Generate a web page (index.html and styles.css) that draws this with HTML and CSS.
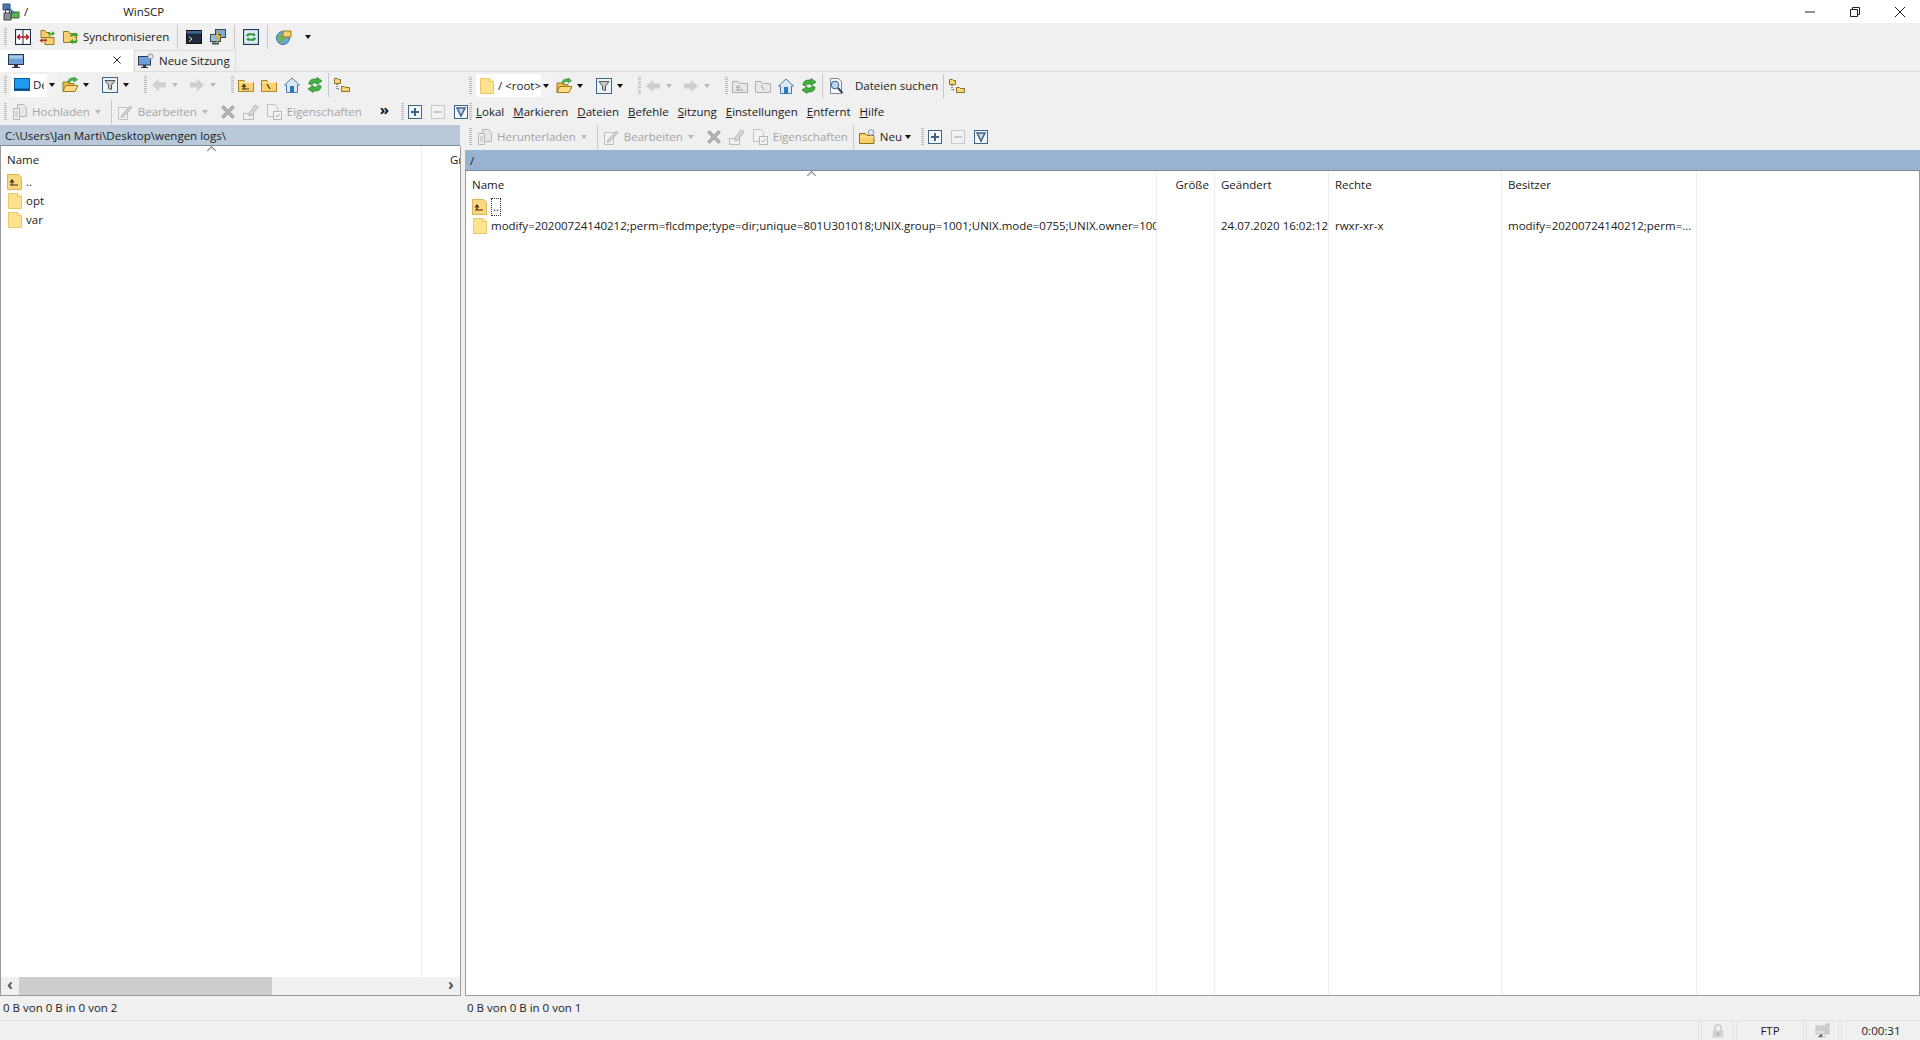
FILE: index.html
```html
<!DOCTYPE html>
<html lang="de">
<head>
<meta charset="utf-8">
<title>WinSCP</title>
<link rel="stylesheet" href="styles.css">
</head>
<body>
<svg class="defs" width="0" height="0" aria-hidden="true">
  <defs>
    <symbol id="folder" viewBox="0 0 16 18"><path d="M1.5 1.5h9l4 3v12h-13z" fill="#fde28f" stroke="#e8c868"/><path d="M10.5 1.5v3h4" fill="#ffefb8" stroke="#e8c868"/></symbol>
    <symbol id="folder-up" viewBox="0 0 16 18"><path d="M.5 1.5h11l3 3v12H.5z" fill="#fbd880" stroke="#dcb552"/><path d="M3 12h8M5 12V7.5M3 9.5l2-2.5 2 2.5" fill="none" stroke="#3a3010" stroke-width="1.2"/></symbol>
    <symbol id="tb-folder" viewBox="0 0 16 16"><path d="M.5 3.5v11h15v-9H7.500l-1.500-2z" fill="#fbd070" stroke="#a98a20"/><path d="M1 5.500h14" stroke="#fff0b8"/></symbol>
    <symbol id="up" viewBox="0 0 16 16"><use href="#tb-folder"/><path d="M4 12h7M6 12V8M4 10l2-2.500 2 2.500" fill="none" stroke="#3a3010" stroke-width="1.200"/></symbol>
    <symbol id="root" viewBox="0 0 16 16"><use href="#tb-folder"/><path d="M6 7l3 5" fill="none" stroke="#3a3010" stroke-width="1.200"/></symbol>
    <symbol id="up-off" viewBox="0 0 16 16"><path d="M.5 3.500v11h15v-9H7.500l-1.500-2z" fill="#e8e8e8" stroke="#b0b0b0"/><path d="M4 12h7M6 12V8M4 10l2-2.500 2 2.500" fill="none" stroke="#a0a0a0"/></symbol>
    <symbol id="root-off" viewBox="0 0 16 16"><path d="M.5 3.500v11h15v-9H7.500l-1.500-2z" fill="#e8e8e8" stroke="#b0b0b0"/><path d="M6 7l3 5" fill="none" stroke="#a0a0a0"/></symbol>
    <symbol id="home" viewBox="0 0 16 16"><path d="M8 1L.5 8h2v7.500h11V8h2z" fill="#dbe7f3" stroke="#4f79a8"/><rect x="6" y="9" width="4" height="6.500" fill="#2d74c4"/></symbol>
    <symbol id="refresh" viewBox="0 0 16 16"><path d="M2 7C2 3 5 2 8 2h2V.5L15 4l-5 3.500V6H8C6 6 5 6.500 5 8z" fill="#43b043" stroke="#1f7a1f" stroke-width=".7"/><path d="M14 9c0 4-3 5-6 5H6v1.500L1 12l5-3.500V10h2c2 0 3-.5 3-2z" fill="#43b043" stroke="#1f7a1f" stroke-width=".7"/></symbol>
    <symbol id="tree" viewBox="0 0 16 16"><path d="M.5 1.500h3l1 1h2v4h-6z" fill="#f8d77a" stroke="#8a7020"/><path d="M3 7v5h3" fill="none" stroke="#333" stroke-dasharray="1 1"/><path d="M7.500 9.500h3l1 1h4v4h-8z" fill="#f8d77a" stroke="#8a7020"/></symbol>
    <symbol id="open" viewBox="0 0 16 16"><path d="M1 14.500V5h5l1 1.500h5v8z" fill="#f2c14f" stroke="#9a7a18"/><path d="M1 14.500l2.500-6H16l-3 6z" fill="#fbdc85" stroke="#9a7a18"/><path d="M6 5c0-3 3-4.500 6-4V0l3.500 2.500L12 5V3.500C9.500 3 8 4 8 5.500z" fill="#4ab54a" stroke="#1f7a1f" stroke-width=".5"/></symbol>
    <symbol id="filter" viewBox="0 0 16 16"><rect x=".5" y=".5" width="15" height="15" fill="#eef3f8" stroke="#3f6488"/><path d="M3 3.500h10L9.500 8v4.500l-3-1V8z" fill="#c9c9c9" stroke="#555"/></symbol>
    <symbol id="back" viewBox="0 0 16 16"><path d="M8 2L1 8l7 6v-3.500h7v-5H8z" fill="#cfcfcf"/></symbol>
    <symbol id="forward" viewBox="0 0 16 16"><path d="M8 2l7 6-7 6v-3.500H1v-5h7z" fill="#cfcfcf"/></symbol>
    <symbol id="copy-off" viewBox="0 0 16 16"><path d="M2.500 4.500h6v11h-6z" fill="#eee" stroke="#b8b8b8"/><path d="M6.500.5h6l3 3v9h-7v-8h-2z" fill="#e6e6e6" stroke="#b8b8b8"/><path d="M4 8h3M4 10h3M4 12h3" stroke="#bbb"/></symbol>
    <symbol id="edit-off" viewBox="0 0 16 16"><path d="M1.500 3.500h9v12h-9z" fill="#f2f2f2" stroke="#c0c0c0"/><path d="M5 11l8-9 2 1.500-8 9-3 1z" fill="#d4d4d4" stroke="#b8b8b8"/></symbol>
    <symbol id="delete" viewBox="0 0 16 16"><path d="M1.500 3.500L3.500 1.500 8 6l4.500-4.500 2 2L10 8l4.500 4.500-2 2L8 10l-4.500 4.500-2-2L6 8z" fill="#b3b3b3" stroke="#a5a5a5"/></symbol>
    <symbol id="rename-off" viewBox="0 0 16 16"><rect x=".5" y="9.500" width="10" height="6" fill="#f0f0f0" stroke="#bbb"/><path d="M6 9l6-8 3 2-6 8-3 1z" fill="#d6d6d6" stroke="#b8b8b8"/></symbol>
    <symbol id="props-off" viewBox="0 0 16 16"><path d="M1.500.5h7l3 3v9h-10z" fill="#f2f2f2" stroke="#c0c0c0"/><rect x="7.500" y="7.500" width="8" height="8" fill="#f5f5f5" stroke="#b8b8b8"/><path d="M9.500 11.500l1.500 1.500 2.500-3" fill="none" stroke="#aaa"/></symbol>
    <symbol id="plus" viewBox="0 0 14 14"><rect x=".5" y=".5" width="13" height="13" fill="#f4f7fa" stroke="#3f6488"/><path d="M3 7h8M7 3v8" stroke="#3f6488" stroke-width="2"/></symbol>
    <symbol id="minus" viewBox="0 0 14 14"><rect x=".5" y=".5" width="13" height="13" fill="#f2f2f2" stroke="#c4c9ce"/><path d="M3 7h8" stroke="#c4c9ce" stroke-width="2"/></symbol>
    <symbol id="invert" viewBox="0 0 14 14"><rect x=".5" y=".5" width="13" height="13" fill="#f4f7fa" stroke="#3f6488"/><path d="M3 3h8L7 11z" fill="#c7d5e3" stroke="#3f6488" stroke-width="1.500"/></symbol>
    <symbol id="monitor" viewBox="0 0 16 16"><rect x=".5" y="1.500" width="15" height="10" fill="#6e9fd6" stroke="#2a3a4e"/><rect x="1.500" y="2.500" width="13" height="3" fill="#a9c8ea"/><path d="M6 12h4v2h2v1H4v-1h2z" fill="#2a3a4e"/></symbol>
    <symbol id="new-session" viewBox="0 0 16 16"><rect x=".5" y="3.500" width="12" height="8.500" fill="#6e9fd6" stroke="#2a3a4e"/><path d="M5 12h3v2h2v1H3v-1h2z" fill="#2a3a4e"/><circle cx="12.500" cy="3.500" r="2.500" fill="#dfe8f2" stroke="#7d94ab"/></symbol>
    <symbol id="drive" viewBox="0 0 16 16"><rect x=".5" y="1.500" width="15" height="12" fill="#1c9bf0" stroke="#0d5c9e"/><path d="M1 12.500h14" stroke="#0a4d85" stroke-width="2"/></symbol>
    <symbol id="compare" viewBox="0 0 16 16"><rect x=".5" y=".5" width="15" height="15" fill="#fff" stroke="#1d2f4d" stroke-width="1.200"/><path d="M8 1v14" stroke="#1d2f4d"/><path d="M2 8h12M5 5.500L2.500 8 5 10.500M11 5.500L13.500 8 11 10.500" fill="none" stroke="#b01818" stroke-width="1.500"/></symbol>
    <symbol id="sync1" viewBox="0 0 16 16"><path d="M2 3.500V1.500h4l1 2h4v5H2z" fill="#f8d070" stroke="#97791f"/><path d="M6 8.500h9v7H6z" fill="#f8d070" stroke="#97791f"/><path d="M9 4h4V2l3 2.500L13 7V5.500H9z" fill="#3aa53a"/><path d="M8 12H3.500v2L.5 11.500 3.500 9v1.500H8z" fill="#c0301f"/></symbol>
    <symbol id="sync2" viewBox="0 0 16 16"><path d="M.5 2.500h5l1 2h7v9H.500z" fill="#f8d070" stroke="#97791f"/><path d="M7 7c1-3 4-3 5-2V3.500L15.500 6 12 8.500V7c-1-.5-2.500-.5-3 1z" fill="#3aa53a"/><path d="M15 11c-1 3-4 3.500-5 2.500V15l-3.500-2.500L10 10v1.500c1 .5 2.500.5 3-.5z" fill="#3aa53a"/></symbol>
    <symbol id="console" viewBox="0 0 16 16"><rect x=".5" y="1.500" width="15" height="13" fill="#1d2b3d" stroke="#111"/><path d="M.5 2h15v2.500H.5z" fill="#3d6a99"/><path d="M3 7.500L6 10l-3 2.500" fill="none" stroke="#dfe7ef"/></symbol>
    <symbol id="putty" viewBox="0 0 16 16"><rect x="5.500" y=".5" width="10" height="8" fill="#7ea8d6" stroke="#33475c"/><rect x=".5" y="5.500" width="10" height="7" fill="#9cbde0" stroke="#33475c"/><path d="M2 14.500h7" stroke="#33475c" stroke-width="2"/><path d="M9 1L5 8h3l-2 7 5-8H8z" fill="#f4c838" stroke="#a98818" stroke-width=".5"/></symbol>
    <symbol id="queue" viewBox="0 0 16 16"><rect x=".5" y=".5" width="15" height="15" fill="#dce8f2" stroke="#1d3c5c" stroke-width="1.200"/><path d="M3 7c0-3 5-4 7-2V3.500L13 6l-3 1.500V6.500C8.500 6 6 6 5 7.500z" fill="#2f9d3d"/><path d="M13 9c0 3-5 4-7 2v1.500L3 10l3-1.500v1c1.500.5 4 .5 5-1z" fill="#2f9d3d"/></symbol>
    <symbol id="globe" viewBox="0 0 16 16"><circle cx="7" cy="9" r="6.500" fill="#6ea8dc" stroke="#3d6d9e"/><path d="M3 5c2 1 5 0 6 3s-2 5-4 6c-2-2-4-6-2-9z" fill="#71b45a"/><path d="M7 2h8v6H7z" fill="#f8d070" stroke="#97791f"/></symbol>
    <symbol id="search" viewBox="0 0 16 16"><path d="M2.500.5h8l3 3v12h-11z" fill="#f6f8fa" stroke="#7a8a9a"/><circle cx="7" cy="7" r="3.800" fill="#bcd6ef" stroke="#33618e"/><path d="M10 10l4.500 5" stroke="#33475c" stroke-width="2"/></symbol>
    <symbol id="new-folder" viewBox="0 0 16 16"><path d="M.5 14.500v-10h6l1.500 2h7v8z" fill="#f8cf66" stroke="#8c7018"/><path d="M1 8h14" stroke="#ffeeb0"/><circle cx="12" cy="3.500" r="2.800" fill="#e4ebf2" stroke="#7d94ab"/></symbol>
    <symbol id="lock" viewBox="0 0 14 16"><path d="M3.500 7V4.500a3.500 3.500 0 017 0V7" fill="none" stroke="#c4c4c4" stroke-width="1.500"/><rect x="1" y="7" width="12" height="8.500" fill="#d2d2d2"/><rect x="6" y="10" width="2" height="3" fill="#aaa"/></symbol>
    <symbol id="server" viewBox="0 0 16 16"><path d="M1 3h10v8H1z" fill="#e0e0e0" stroke="#c0c0c0"/><path d="M2 5h8M2 7h8" stroke="#bdbdbd"/><path d="M11 1h3v10h-3z" fill="#d4d4d4" stroke="#bbb"/><path d="M7 11v3H3M7 14h4" stroke="#b4b4b4"/></symbol>
    <symbol id="app" viewBox="0 0 18 18"><path d="M1 1h7v6H1z" fill="#4a7ab0" stroke="#2c4f78"/><path d="M9 9h8v6H9z" fill="#5fb050" stroke="#2d6f2a"/><path d="M6 5l6 5" stroke="#3a6d9e" stroke-width="2"/><rect x="2" y="10" width="7" height="7" fill="#8a8f96" stroke="#444"/><path d="M3.500 10V8a2 2 0 014 0v2" fill="none" stroke="#444"/></symbol>
  </defs>
</svg>

<div class="app">
  <header class="titlebar">
    <svg class="i18 app-icon"><use href="#app"/></svg>
    <span class="title-path">/</span>
    <span class="title-name">WinSCP</span>
    <div class="wincontrols">
      <svg class="winbtn" viewBox="0 0 10 10"><path d="M0 5h10" stroke="#222"/></svg>
      <svg class="winbtn" viewBox="0 0 10 10"><path d="M.5 2.500h7v7h-7zM2.500 2.500v-2h7v7h-2" fill="none" stroke="#222"/></svg>
      <svg class="winbtn" viewBox="0 0 10 10"><path d="M0 0l10 10M10 0L0 10" stroke="#222"/></svg>
    </div>
  </header>

  <div class="maintoolbar">
    <span class="grip"></span>
    <svg class="i16"><use href="#compare"/></svg>
    <svg class="i16"><use href="#sync1"/></svg>
    <span class="tool"><svg class="i16"><use href="#sync2"/></svg><span class="lbl">Synchronisieren</span></span>
    <span class="sep"></span>
    <svg class="i16"><use href="#console"/></svg>
    <svg class="i16"><use href="#putty"/></svg>
    <span class="sep"></span>
    <svg class="i16"><use href="#queue"/></svg>
    <span class="sep sep-far"></span>
    <svg class="i16"><use href="#globe"/></svg>
    <span class="caret"></span>
  </div>

  <nav class="tabs">
    <div class="tab tab-active">
      <svg class="i16"><use href="#monitor"/></svg>
      <svg class="tab-close" viewBox="0 0 8 8"><path d="M.5.500l7 7M7.500.500l-7 7" stroke="#222"/></svg>
    </div>
    <div class="tab tab-new">
      <svg class="i16"><use href="#new-session"/></svg>
      <span>Neue Sitzung</span>
    </div>
  </nav>

  <main class="panels">
    <section class="panel panel-left">
      <div class="bar bar-left-1">
        <span class="grip"></span>
        <span class="combo combo-drive">
          <svg class="i16 drive-icon"><use href="#drive"/></svg><span class="combo-text">De</span>
          <span class="combo-drop"><span class="caret"></span></span>
        </span>
        <svg class="i16"><use href="#open"/></svg><span class="caret"></span>
        <svg class="i16 gap8"><use href="#filter"/></svg><span class="caret"></span>
        <span class="grip gap10"></span>
        <svg class="i16"><use href="#back"/></svg><span class="caret caret-off"></span>
        <svg class="i16 gap6"><use href="#forward"/></svg><span class="caret caret-off"></span>
        <span class="grip gap10"></span>
        <svg class="i16"><use href="#up"/></svg>
        <svg class="i16 gap7"><use href="#root"/></svg>
        <svg class="i16 gap7"><use href="#home"/></svg>
        <svg class="i16 gap7"><use href="#refresh"/></svg>
        <span class="sep"></span>
        <svg class="i16"><use href="#tree"/></svg>
      </div>
      <div class="bar bar-left-2">
        <span class="grip"></span>
        <svg class="i16"><use href="#copy-off"/></svg>
        <span class="lbl off">Hochladen</span><span class="caret caret-off"></span>
        <span class="sep"></span>
        <svg class="i16"><use href="#edit-off"/></svg>
        <span class="lbl off">Bearbeiten</span><span class="caret caret-off"></span>
        <svg class="i16 gap7"><use href="#delete"/></svg>
        <svg class="i16 gap7"><use href="#rename-off"/></svg>
        <svg class="i16 gap7"><use href="#props-off"/></svg>
        <span class="lbl off">Eigenschaften</span>
        <span class="chevrons">»</span>
        <span class="grip"></span>
        <svg class="i14"><use href="#plus"/></svg>
        <svg class="i14 gap9"><use href="#minus"/></svg>
        <svg class="i14 gap9"><use href="#invert"/></svg>
      </div>
      <div class="pathbar pathbar-inactive">C:\Users\Jan Marti\Desktop\wengen logs\</div>
      <div class="list list-left">
        <div class="columns columns-left">
          <div class="col"><div class="col-head sorted">Name</div>
            <div class="file"><svg class="i-file"><use href="#folder-up"/></svg><span>..</span></div>
            <div class="file"><svg class="i-file"><use href="#folder"/></svg><span>opt</span></div>
            <div class="file"><svg class="i-file"><use href="#folder"/></svg><span>var</span></div>
          </div>
          <div class="col col-clipped"><div class="col-head">Größe</div></div>
        </div>
        <div class="hscroll">
          <span class="hscroll-arrow">‹</span>
          <span class="hscroll-track"><span class="hscroll-thumb"></span></span>
          <span class="hscroll-arrow">›</span>
        </div>
      </div>
      <div class="status-line">0 B von 0 B in 0 von 2</div>
    </section>

    <section class="panel panel-right">
      <div class="bar bar-right-1">
        <span class="grip"></span>
        <span class="combo combo-path">
          <svg class="i-file"><use href="#folder"/></svg><span class="combo-text">/ &lt;root&gt;</span>
          <span class="combo-drop"><span class="caret"></span></span>
        </span>
        <svg class="i16"><use href="#open"/></svg><span class="caret"></span>
        <svg class="i16 gap8"><use href="#filter"/></svg><span class="caret"></span>
        <span class="grip gap10"></span>
        <svg class="i16"><use href="#back"/></svg><span class="caret caret-off"></span>
        <svg class="i16 gap6"><use href="#forward"/></svg><span class="caret caret-off"></span>
        <span class="grip gap10"></span>
        <svg class="i16"><use href="#up-off"/></svg>
        <svg class="i16 gap7"><use href="#root-off"/></svg>
        <svg class="i16 gap7"><use href="#home"/></svg>
        <svg class="i16 gap7"><use href="#refresh"/></svg>
        <span class="sep"></span>
        <span class="tool"><svg class="i16"><use href="#search"/></svg><span class="lbl">Dateien suchen</span></span>
        <span class="sep"></span>
        <svg class="i16"><use href="#tree"/></svg>
      </div>
      <div class="bar bar-menu">
        <span class="grip"></span>
        <span class="menu"><u>L</u>okal</span>
        <span class="menu"><u>M</u>arkieren</span>
        <span class="menu"><u>D</u>ateien</span>
        <span class="menu"><u>B</u>efehle</span>
        <span class="menu"><u>S</u>itzung</span>
        <span class="menu"><u>E</u>instellungen</span>
        <span class="menu"><u>E</u>ntfernt</span>
        <span class="menu"><u>H</u>ilfe</span>
      </div>
      <div class="bar bar-right-3">
        <span class="grip"></span>
        <svg class="i16"><use href="#copy-off"/></svg>
        <span class="lbl off">Herunterladen</span><span class="caret caret-off"></span>
        <span class="sep"></span>
        <svg class="i16"><use href="#edit-off"/></svg>
        <span class="lbl off">Bearbeiten</span><span class="caret caret-off"></span>
        <svg class="i16 gap7"><use href="#delete"/></svg>
        <svg class="i16 gap7"><use href="#rename-off"/></svg>
        <svg class="i16 gap7"><use href="#props-off"/></svg>
        <span class="lbl off">Eigenschaften</span>
        <span class="sep"></span>
        <svg class="i16"><use href="#new-folder"/></svg>
        <span class="lbl">Neu</span><span class="caret caret-tight"></span>
        <span class="grip gap10"></span>
        <svg class="i14"><use href="#plus"/></svg>
        <svg class="i14 gap9"><use href="#minus"/></svg>
        <svg class="i14 gap9"><use href="#invert"/></svg>
      </div>
      <div class="pathbar pathbar-active">/</div>
      <div class="list list-right">
        <div class="columns columns-right">
          <div class="col"><div class="col-head sorted">Name</div>
            <div class="file"><svg class="i-file"><use href="#folder-up"/></svg><span class="focused">..</span></div>
            <div class="file"><svg class="i-file"><use href="#folder"/></svg><span>modify=20200724140212;perm=flcdmpe;type=dir;unique=801U301018;UNIX.group=1001;UNIX.mode=0755;UNIX.owner=1001;</span></div>
          </div>
          <div class="col"><div class="col-head col-right">Größe</div></div>
          <div class="col"><div class="col-head">Geändert</div><div class="cell"></div><div class="cell">24.07.2020 16:02:12</div></div>
          <div class="col"><div class="col-head">Rechte</div><div class="cell"></div><div class="cell">rwxr-xr-x</div></div>
          <div class="col"><div class="col-head">Besitzer</div><div class="cell"></div><div class="cell">modify=20200724140212;perm=...</div></div>
          <div class="col col-fill"></div>
        </div>
      </div>
      <div class="status-line status-line-right">0 B von 0 B in 0 von 1</div>
    </section>
  </main>

  <footer class="statusbar">
    <div class="st st-fill"></div>
    <div class="st st-icon"><svg class="i14"><use href="#lock"/></svg></div>
    <div class="st st-proto">FTP</div>
    <div class="st st-icon"><svg class="i16"><use href="#server"/></svg></div>
    <div class="st st-time">0:00:31</div>
  </footer>
</div>
</body>
</html>
```

FILE: styles.css
```css
* { box-sizing: border-box; }
html, body { margin: 0; padding: 0; height: 100%; overflow: hidden; }
body { font: 11.5px/16px "Open Sans", "Noto Sans", "Liberation Sans", sans-serif; color: #1a1a1a; background: #f0f0f0; }
.defs { position: absolute; }
.app { display: flex; flex-direction: column; width: 1920px; height: 1040px; }
svg { flex: none; display: block; }
.i16 { width: 16px; height: 16px; }
.i18 { width: 18px; height: 18px; }
.i14 { width: 14px; height: 14px; }
.i-file { width: 16px; height: 18px; }
.gap6 { margin-left: 6px; }
.gap7 { margin-left: 7px; }
.gap8 { margin-left: 8px; }
.gap9 { margin-left: 9px; }
.gap10 { margin-left: 10px; }

.titlebar { height: 23px; flex: none; background: #fff; display: flex; align-items: center; padding-left: 2px; }
.title-path { margin-left: 4px; }
.title-name { margin-left: 95px; }
.wincontrols { margin-left: auto; display: flex; gap: 35px; padding-right: 15px; }
.winbtn { width: 10px; height: 10px; }

.maintoolbar { height: 27px; flex: none; display: flex; align-items: center; padding-left: 4px; gap: 8px; }
.maintoolbar .tool { gap: 4px; }
.sep-far { margin-left: 402px; }
.tool { display: flex; align-items: center; gap: 6px; }
.grip { flex: none; width: 3px; height: 18px; background: repeating-linear-gradient(to bottom, #bdbdbd 0 1px, transparent 1px 2px); }
.sep { flex: none; width: 1px; height: 24px; background: #c8c8c8; margin: 0 5px; }
.maintoolbar .sep { margin: 0; }
.caret { flex: none; width: 0; height: 0; margin: 0 5px; border-left: 3.500px solid transparent; border-right: 3.500px solid transparent; border-top: 4px solid #111; }
.caret-off { border-top-color: #b8b8b8; }
.caret-tight { margin-left: 3px; margin-right: 0; }
.lbl { white-space: nowrap; }
.off { color: #a3a3a3; }

.tabs { height: 22px; flex: none; display: flex; align-items: flex-end; border-bottom: 1px solid #dcdcdc; gap: 1px; }
.tab { display: flex; align-items: center; height: 22px; }
.tab-active { width: 133px; background: #fff; padding: 0 8px; justify-content: space-between; margin-bottom: -1px; }
.tab-close { width: 8px; height: 8px; margin-right: 4px; margin-bottom: 3px; }
.tab-new { width: 102px; height: 21px; background: #f0f0f0; border: 1px solid #dcdcdc; border-bottom: 0; padding-left: 3px; gap: 5px; }

.panels { flex: 1; min-height: 0; display: flex; gap: 4px; }
.panel { display: flex; flex-direction: column; min-width: 0; }
.panel-left { width: 461px; flex: none; }
.panel-right { flex: 1; }
.bar { flex: none; display: flex; align-items: center; white-space: nowrap; padding-left: 4px; }
.bar > .grip { margin-right: 4px; }
.bar-left-1 { height: 26px; }
.bar-left-2 { height: 27px; }
.bar-right-1 { height: 27px; }
.bar-menu { height: 25px; }
.bar-right-3 { height: 26px; }
.bar .lbl { margin-left: 5px; }
.combo { display: flex; align-items: center; background: #fff; height: 23px; margin-right: 4px; }
.combo-drive { width: 47px; padding-left: 3px; }
.drive-icon { width: 16px; }
.combo-drive .combo-text { width: 11px; margin-left: 3px; overflow: hidden; }
.combo-path { width: 76px; padding-left: 3px; }
.combo-path .combo-text { margin-left: 3px; flex: 1; }
.combo-drop { margin-left: auto; width: 11px; height: 23px; background: #f2f2f2; display: flex; align-items: center; }
.combo-drop .caret { margin: 0 2px; }
.chevrons { margin: -6px 12px 0 18px; font-size: 15px; font-weight: 700; color: #111; }
.menu { margin-right: 9px; }
.menu u { text-underline-offset: 1px; }

.pathbar { flex: none; height: 21px; line-height: 21px; padding-left: 5px; border-bottom: 1px solid #7f8a95; }
.pathbar-inactive { background: #b9c9da; margin-right: 1px; }
.pathbar-active { background: #98b2d1; }

.list { flex: 1; min-height: 0; background: #fff; display: flex; flex-direction: column; border: 1px solid #9a9a9a; border-top: 0; }
.columns { flex: 1; min-height: 0; display: flex; overflow: hidden; }
.col { flex: none; border-right: 1px solid #eaedf1; min-width: 0; overflow: hidden; white-space: nowrap; }
.columns-left .col:first-child { width: 421px; position: relative; }
.col-clipped { flex: 1; padding-left: 28px; border-right: 0; }
.columns-left .col-clipped .col-head { padding-left: 0; }
.col-head { height: 26px; line-height: 28px; padding-left: 6px; }
.col-right { text-align: right; padding: 0 5px 0 0; }
.sorted { position: relative; }
.sorted::after { content: ""; position: absolute; top: 1px; left: 50%; width: 6px; height: 6px; margin-left: -3px; border-left: 1px solid #777; border-top: 1px solid #777; transform: rotate(45deg) scale(.9); }
.file { height: 19px; display: flex; align-items: center; padding-left: 6px; gap: 3px; }
.focused { outline: 1px dotted #333; outline-offset: -1px; padding: 0 2px; line-height: 18px; }
.cell { height: 19px; line-height: 19px; padding-left: 6px; }
.columns-right .col:nth-child(1) { width: 691px; position: relative; }
.columns-right .col:nth-child(2) { width: 58px; }
.columns-right .col:nth-child(3) { width: 114px; }
.columns-right .col:nth-child(4) { width: 173px; }
.columns-right .col:nth-child(5) { width: 195px; }
.col-fill { flex: 1 !important; border-right: 0; }
.hscroll { flex: none; height: 18px; background: #f0f0f0; display: flex; align-items: stretch; }
.hscroll-arrow { width: 18px; text-align: center; line-height: 15px; font-size: 16px; font-weight: 700; color: #555; }
.hscroll-track { flex: 1; display: block; }
.hscroll-thumb { display: block; width: 253px; height: 100%; background: #cdcdcd; }

.status-line { flex: none; height: 24px; line-height: 24px; padding-left: 3px; }
.status-line-right { padding-left: 2px; }
.statusbar { flex: none; height: 20px; display: flex; gap: 2px; border-top: 1px solid #e2e2e2; }
.st { border-right: 1px solid #e2e2e2; border-left: 1px solid #e2e2e2; display: flex; align-items: center; justify-content: center; }
.st-fill { flex: 1; border-left: 0; }
.st-icon { width: 33px; }
.st-proto { width: 68px; }
.st-time { width: 79px; border-right: 0; }
```
